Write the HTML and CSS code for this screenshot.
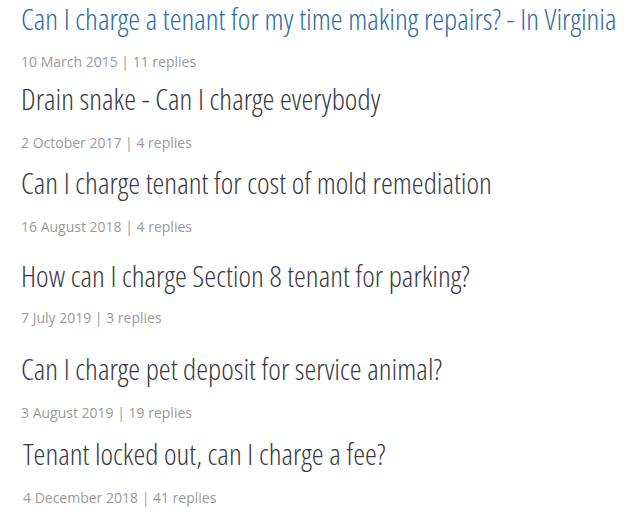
FILE: index.html
```html
<!DOCTYPE html>
<html lang="en">
<head>
<meta charset="utf-8">
<title>Threads</title>
<link rel="stylesheet" href="styles.css">
</head>
<body>
<ul class="threads">
  <li class="thread">
    <a class="thread-title thread-title--active" href="#">Can I charge a tenant for my time making repairs? - In Virginia</a>
    <div class="thread-meta">10 March 2015 | 11 replies</div>
  </li>
  <li class="thread">
    <a class="thread-title" href="#">Drain snake - Can I charge everybody</a>
    <div class="thread-meta">2 October 2017 | 4 replies</div>
  </li>
  <li class="thread">
    <a class="thread-title" href="#">Can I charge tenant for cost of mold remediation</a>
    <div class="thread-meta">16 August 2018 | 4 replies</div>
  </li>
  <li class="thread">
    <a class="thread-title" href="#">How can I charge Section 8 tenant for parking?</a>
    <div class="thread-meta">7 July 2019 | 3 replies</div>
  </li>
  <li class="thread">
    <a class="thread-title" href="#">Can I charge pet deposit for service animal?</a>
    <div class="thread-meta">3 August 2019 | 19 replies</div>
  </li>
  <li class="thread thread--shifted">
    <a class="thread-title" href="#">Tenant locked out, can I charge a fee?</a>
    <div class="thread-meta">4 December 2018 | 41 replies</div>
  </li>
</ul>
</body>
</html>
```
FILE: styles.css
```css
html, body {
  margin: 0;
  padding: 0;
  background: #ffffff;
}

body {
  padding: 1px 0 0 21px;
}

.threads {
  list-style: none;
  margin: 0;
  padding: 0;
  display: flex;
  flex-direction: column;
}

.thread {
  display: flex;
  flex-direction: column;
  gap: 16px;
}

.thread:nth-child(1) { gap: 15px; }
.thread:nth-child(2) { margin-top: 9px; }
.thread:nth-child(3) { margin-top: 12px; }
.thread:nth-child(4) { margin-top: 21px; gap: 14px; }
.thread:nth-child(5) { margin-top: 23px; }
.thread:nth-child(6) { margin-top: 13px; }

.thread--shifted {
  padding-left: 2px;
}

.thread-title {
  font-family: "Open Sans", "Liberation Sans Narrow", sans-serif;
  font-stretch: 75%;
  font-weight: 300;
  font-size: 30px;
  line-height: 36px;
  color: #3a3b45;
  text-decoration: none;
  white-space: nowrap;
}

.thread-title--active {
  color: #2e6ca3;
}

.thread-meta {
  font-family: "Open Sans", sans-serif;
  font-size: 14px;
  line-height: 20px;
  color: #9a9a9a;
  white-space: nowrap;
}
```
